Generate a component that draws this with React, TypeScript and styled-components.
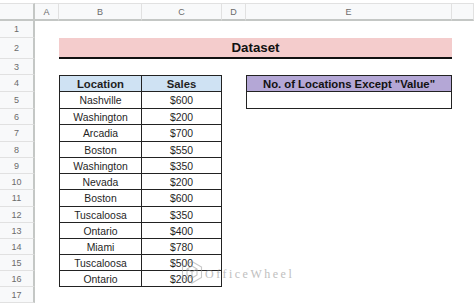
import React from "react";
import styled, { createGlobalStyle } from "styled-components";

const Global = createGlobalStyle`
  html, body { margin: 0; padding: 0; background: #ffffff; overflow: hidden; }
  body { font-family: "Liberation Sans", Arial, sans-serif; }
`;

const COLS = ["A", "B", "C", "D", "E", ""];
const ROW_HEIGHTS = [17, 21, 16, 17, 17, 16, 17, 16, 16, 16, 17, 16, 16, 16, 16, 16, 16];

const Page = styled.div`
  position: relative;
  width: 474px;
  height: 305px;
  padding-top: 3px;
  box-sizing: border-box;
  overflow: hidden;
`;

const Sheet = styled.div`
  display: grid;
  grid-template-columns: 35px 24px 83px 80px 24px 206px 1fr;
  grid-template-rows: 18px ${ROW_HEIGHTS.map((h) => `${h}px`).join(" ")};
`;

const Corner = styled.div`
  grid-row: 1;
  grid-column: 1;
  background: #f8f9fa;
  border-top: 1px solid #e1e1e1;
  border-right: 2px solid #c4c7c5;
  border-bottom: 2px solid #c4c7c5;
`;

const ColHeader = styled.div<{ $col: number }>`
  grid-row: 1;
  grid-column: ${(p) => p.$col};
  display: flex;
  align-items: center;
  justify-content: center;
  background: #f8f9fa;
  border-top: 1px solid #e1e1e1;
  border-right: 1px solid #e1e1e1;
  border-bottom: 2px solid #c4c7c5;
  color: #6b6b6b;
  font-size: 9px;
`;

const RowHeader = styled.div<{ $row: number }>`
  grid-row: ${(p) => p.$row};
  grid-column: 1;
  display: flex;
  align-items: center;
  justify-content: center;
  background: #f8f9fa;
  border-right: 2px solid #c4c7c5;
  border-bottom: 1px solid #e1e1e1;
  color: #6b6b6b;
  font-size: 9px;
`;

const TitleBand = styled.div`
  grid-row: 3;
  grid-column: 3 / 7;
  display: flex;
  align-items: center;
  justify-content: center;
  background: #f4cccc;
  border-bottom: 2px solid #111;
  color: #111;
  font-size: 13.3px;
  font-weight: 700;
`;

const Cell = styled.div<{ $row: number; $col: number; $head?: boolean; $first?: boolean; $top?: boolean }>`
  grid-row: ${(p) => p.$row};
  grid-column: ${(p) => p.$col};
  display: flex;
  align-items: center;
  justify-content: center;
  padding-top: 1px;
  background: ${(p) => (p.$head ? "#cfe2f3" : "#ffffff")};
  border-right: 1px solid #222;
  border-bottom: 1px solid #222;
  border-left: ${(p) => (p.$first ? "1px solid #222" : "none")};
  border-top: ${(p) => (p.$top ? "1px solid #222" : "none")};
  color: #1f1f1f;
  font-size: ${(p) => (p.$head ? "11.3px" : "10.4px")};
  font-weight: ${(p) => (p.$head ? 700 : 400)};
`;

const ResultHead = styled.div`
  grid-row: 5;
  grid-column: 6;
  display: flex;
  align-items: center;
  justify-content: center;
  padding-top: 1px;
  background: #b4a7d6;
  border: 1px solid #222;
  color: #111;
  font-size: 11.3px;
  font-weight: 700;
  white-space: nowrap;
`;

const ResultCell = styled.div`
  grid-row: 6;
  grid-column: 6;
  background: #ffffff;
  border: 1px solid #222;
  border-top: none;
`;

const Watermark = styled.div`
  position: absolute;
  left: 180px;
  top: 260px;
  display: flex;
  align-items: flex-end;
  gap: 1px;
  opacity: 0.55;
  pointer-events: none;
`;

const WatermarkText = styled.span`
  font-family: "Liberation Serif", "Times New Roman", serif;
  font-size: 12px;
  letter-spacing: 2.5px;
  color: #8a8a8a;
  line-height: 1;
  padding-bottom: 5px;
`;

const data: [string, string][] = [
  ["Nashville", "$600"],
  ["Washington", "$200"],
  ["Arcadia", "$700"],
  ["Boston", "$550"],
  ["Washington", "$350"],
  ["Nevada", "$200"],
  ["Boston", "$600"],
  ["Tuscaloosa", "$350"],
  ["Ontario", "$400"],
  ["Miami", "$780"],
  ["Tuscaloosa", "$500"],
  ["Ontario", "$200"],
];

const Logo = () => (
  <svg width="24" height="25" viewBox="0 0 24 25" fill="none" stroke="#9a9a9a" strokeWidth="1.1">
    <path d="M12 1.5 L21.5 7 V17.5 L12 23 L2.5 17.5 V7 Z" />
    <path d="M12 6 L17 9 V15 L12 18 L7 15 V9 Z" />
    <path d="M12 12 L17 9 M12 12 L7 9 M12 12 V18" />
  </svg>
);

export default function App() {
  return (
    <Page>
      <Global />
      <Sheet>
        <Corner />
        {COLS.map((c, i) => (
          <ColHeader key={i} $col={i + 2}>
            {c}
          </ColHeader>
        ))}
        {ROW_HEIGHTS.map((_, i) => (
          <RowHeader key={i} $row={i + 2}>
            {i + 1}
          </RowHeader>
        ))}
        <TitleBand>Dataset</TitleBand>
        <Cell $row={5} $col={3} $head $first $top>
          Location
        </Cell>
        <Cell $row={5} $col={4} $head $top>
          Sales
        </Cell>
        {data.map(([loc, sales], i) => (
          <React.Fragment key={i}>
            <Cell $row={i + 6} $col={3} $first>
              {loc}
            </Cell>
            <Cell $row={i + 6} $col={4}>
              {sales}
            </Cell>
          </React.Fragment>
        ))}
        <ResultHead>No. of Locations Except "Value"</ResultHead>
        <ResultCell />
      </Sheet>
      <Watermark>
        <Logo />
        <WatermarkText>OfficeWheel</WatermarkText>
      </Watermark>
    </Page>
  );
}
